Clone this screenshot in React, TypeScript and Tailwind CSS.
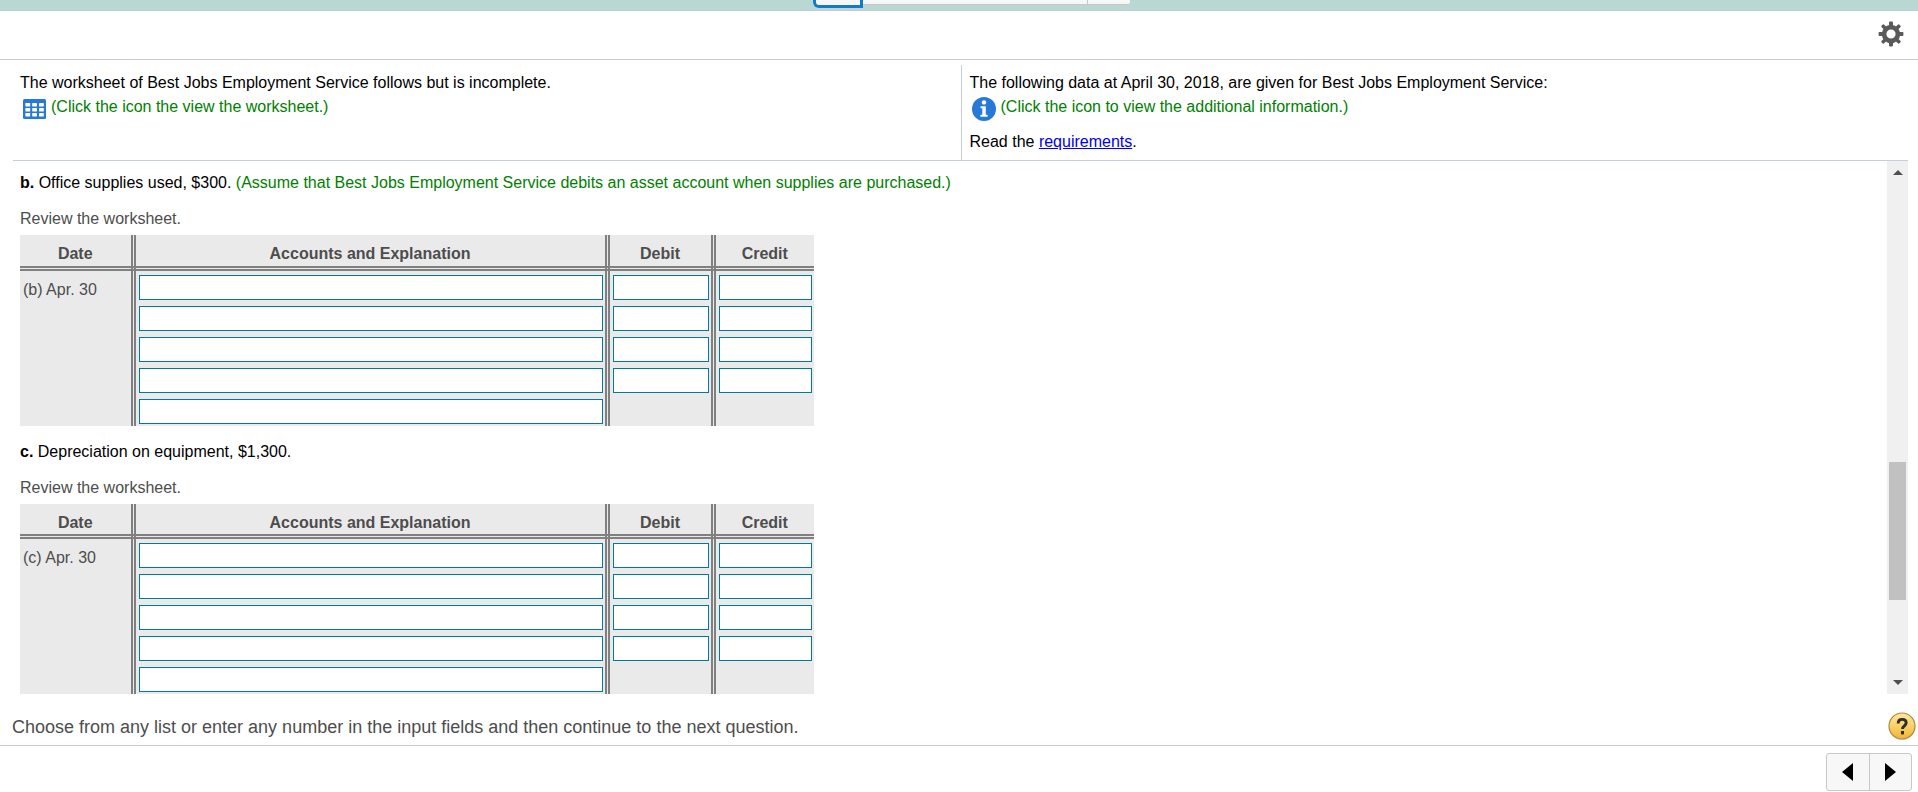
import React from "react";

const ROWS = [1, 2, 3, 4, 5];

function GearIcon() {
  return (
    <svg viewBox="0 0 26 26" className="size-[26px]" aria-hidden="true">
      <g fill="#5a5a5a">
        {[0, 90, 180, 270].map((a) => (
          <rect key={a} x="11" y="0.6" width="4" height="5" rx="0.8" transform={`rotate(${a} 13 13)`} />
        ))}
        {[45, 135, 225, 315].map((a) => (
          <rect key={a} x="11.2" y="0.4" width="3.6" height="5" rx="1.2" transform={`rotate(${a} 13 13)`} />
        ))}
      </g>
      <circle cx="13" cy="13" r="6.9" fill="none" stroke="#5a5a5a" strokeWidth="4.6" />
    </svg>
  );
}

function GridIcon() {
  return (
    <svg viewBox="0 0 23 20" className="h-5 w-[23px]" aria-hidden="true">
      <rect width="23" height="20" rx="1.5" fill="#2779d8" />
      {[4, 9, 14].map((y) =>
        [2.4, 9.2, 16].map((x) => (
          <rect key={`${x}-${y}`} x={x} y={y} width="4.8" height="3.4" rx="0.4" fill="#fff" />
        ))
      )}
    </svg>
  );
}

function InfoIcon() {
  return (
    <svg viewBox="0 0 24 24" className="size-6" aria-hidden="true">
      <circle cx="12" cy="12" r="12" fill="#2779d8" />
      <circle cx="12" cy="5.4" r="2.2" fill="#fff" />
      <path d="M8.6 9.2h5.2v8.6h1.8v2H8.4v-2h1.9v-6.6H8.6z" fill="#fff" />
    </svg>
  );
}

function HelpIcon() {
  return (
    <svg viewBox="0 0 28 29" className="h-[29px] w-7" aria-hidden="true">
      <defs>
        <linearGradient id="help-fill" x1="0" y1="0" x2="0" y2="1">
          <stop offset="0" stopColor="#fbe6a4" />
          <stop offset="0.55" stopColor="#f9cf62" />
          <stop offset="1" stopColor="#f2b233" />
        </linearGradient>
      </defs>
      <circle cx="14" cy="14.9" r="13.2" fill="#bbb" opacity="0.6" />
      <circle cx="14" cy="14" r="13" fill="url(#help-fill)" stroke="#b58a3c" strokeWidth="1.2" />
      <path d="M10.2 11.4c0-2.6 1.6-4 4-4s4 1.3 4 3.4c0 3-3.7 3-3.7 6.2" fill="none" stroke="#2e2e2e" strokeWidth="2.9" />
      <rect x="13" y="19" width="3" height="3.4" fill="#2e2e2e" />
    </svg>
  );
}

const thBase = "border-b-[5px] border-double border-[#808080] px-1 pt-2 text-center align-middle leading-[22px] font-bold";
const inputBase = "block h-[25px] w-full border border-[#007a99] bg-white px-1 text-base outline-none";

function Journal({ letter }: { letter: string }) {
  return (
    <table className="w-[794px] table-fixed border-collapse bg-[#eaeaea] text-[#4d4d4d]">
      <colgroup>
        <col className="w-[113px]" />
        <col className="w-[474px]" />
        <col className="w-[106px]" />
        <col className="w-[101px]" />
      </colgroup>
      <thead>
        <tr className="h-[33px]">
          <th scope="col" className={`${thBase} border-r-[5px]`}>Date</th>
          <th scope="col" className={`${thBase} border-r-[5px]`}>Accounts and Explanation</th>
          <th scope="col" className={`${thBase} border-r-[5px]`}>Debit</th>
          <th scope="col" className={thBase}>Credit</th>
        </tr>
      </thead>
      <tbody>
        {ROWS.map((n) => (
          <tr key={n}>
            <td className="border-r-[5px] border-double border-[#808080] pt-[7px] pl-[3px] leading-[22px]">
              {n === 1 ? `(${letter}) Apr. 30` : null}
            </td>
            <td className="border-r-[5px] border-double border-[#808080] pt-1 pr-[2px] pb-[2px] pl-[3px]">
              <input className={inputBase} aria-label={`Account or explanation, line ${n}`} />
            </td>
            <td className="border-r-[5px] border-double border-[#808080] pt-1 pr-[2px] pb-[2px] pl-[3px]">
              {n < 5 ? <input className={inputBase} aria-label={`Debit, line ${n}`} /> : null}
            </td>
            <td className="pt-1 pr-[2px] pb-[2px] pl-[3px]">
              {n < 5 ? <input className={inputBase} aria-label={`Credit, line ${n}`} /> : null}
            </td>
          </tr>
        ))}
      </tbody>
    </table>
  );
}

export default function App() {
  return (
    <div className="flex h-screen flex-col overflow-hidden bg-white font-['Liberation_Sans',Arial,sans-serif] text-base leading-6 text-black">
      <div className="flex h-[11px] shrink-0 items-start justify-center border-b border-[#c5cad8] bg-[#b9d8d3] pl-[25px]">
        <div className="h-2 w-[50px] rounded-bl-[6px] border-3 border-t-0 border-[#127ac8] bg-[#f7f7f7]" />
        <div className="h-[5px] w-[225px] border-r border-b border-[#c8c8c8] bg-[#f7f7f7]" />
        <div className="h-[5px] w-[42px] rounded-br-[3px] border-b border-[#c8c8c8] bg-[#f7f7f7]" />
      </div>

      <header className="flex h-[49px] shrink-0 items-center justify-end border-b border-[#c5cad8] pr-[14px] pb-[3px]">
        <button type="button" aria-label="Settings"><GearIcon /></button>
      </header>

      <section className="ml-[13px] mr-[10px] flex shrink-0 border-b border-[#c5cfdc] pt-[5px]">
        <div className="w-1/2 pt-[6px] pl-[7px]">
          <p>The worksheet of Best Jobs Employment Service follows but is incomplete.</p>
          <button type="button" className="flex h-6 items-start gap-[5px] pl-[3px] text-[#008000]">
            <span className="pt-1"><GridIcon /></span>
            (Click the icon the view the worksheet.)
          </button>
        </div>
        <div className="w-1/2 border-l border-[#c5cfdc] pt-[6px] pb-[6px] pl-2">
          <p>The following data at April 30, 2018, are given for Best Jobs Employment Service:</p>
          <button type="button" className="flex h-6 items-start gap-[5px] pl-[2px] text-[#008000]">
            <span className="pt-[2px]"><InfoIcon /></span>
            (Click the icon to view the additional information.)
          </button>
          <p className="pt-[11px]">
            Read the <a href="#requirements" className="text-[#0000ee] underline">requirements</a>.
          </p>
        </div>
      </section>

      <main className="mr-[10px] ml-[13px] flex min-h-0 flex-1">
        <div className="min-w-0 flex-1 overflow-hidden pl-[7px]">
          <section className="pt-[10px]">
            <p>
              <b>b.</b> Office supplies used, $300.{" "}
              <span className="text-[#008000]">(Assume that Best Jobs Employment Service debits an asset account when supplies are purchased.)</span>
            </p>
            <p className="pt-3 pb-1 text-[#4d4d4d]">Review the worksheet.</p>
            <Journal letter="b" />
          </section>
          <section className="pt-[14px]">
            <p><b>c.</b> Depreciation on equipment, $1,300.</p>
            <p className="pt-3 pb-1 text-[#4d4d4d]">Review the worksheet.</p>
            <Journal letter="c" />
          </section>
        </div>
        <div className="flex w-[21px] shrink-0 flex-col items-center bg-[#f0f0f0] py-[9px]" aria-hidden="true">
          <svg viewBox="0 0 10 5" className="h-[5px] w-[10px] shrink-0"><path d="M0 5L5 0L10 5Z" fill="#505050" /></svg>
          <div className="flex-[287]" />
          <div className="w-[17px] flex-[138] bg-[#c1c1c1]" />
          <div className="flex-[80]" />
          <svg viewBox="0 0 10 5" className="h-[5px] w-[10px] shrink-0"><path d="M0 0L5 5L10 0Z" fill="#505050" /></svg>
        </div>
      </main>

      <div className="flex h-[52px] shrink-0 items-center justify-between border-b border-[#c5cad8] pt-[14px] pr-[2px] pl-3 text-lg leading-6 text-[#4d4d4d]">
        <p>Choose from any list or enter any number in the input fields and then continue to the next question.</p>
        <button type="button" aria-label="Help"><HelpIcon /></button>
      </div>

      <footer className="flex h-[46px] shrink-0 items-center justify-end pt-[7px] pr-[6px] pb-[1px]">
        <div className="flex h-[38px] w-[86px] rounded-[3px] border border-[#c8c8c8] bg-[#f7f7f7]">
          <button type="button" aria-label="Previous question" className="flex flex-1 items-center justify-center border-r border-[#c8c8c8]">
            <svg viewBox="0 0 11 18" className="h-[18px] w-[11px]"><path d="M11 0V18L0 9Z" /></svg>
          </button>
          <button type="button" aria-label="Next question" className="flex flex-1 items-center justify-center">
            <svg viewBox="0 0 11 18" className="h-[18px] w-[11px]"><path d="M0 0V18L11 9Z" /></svg>
          </button>
        </div>
      </footer>
    </div>
  );
}
